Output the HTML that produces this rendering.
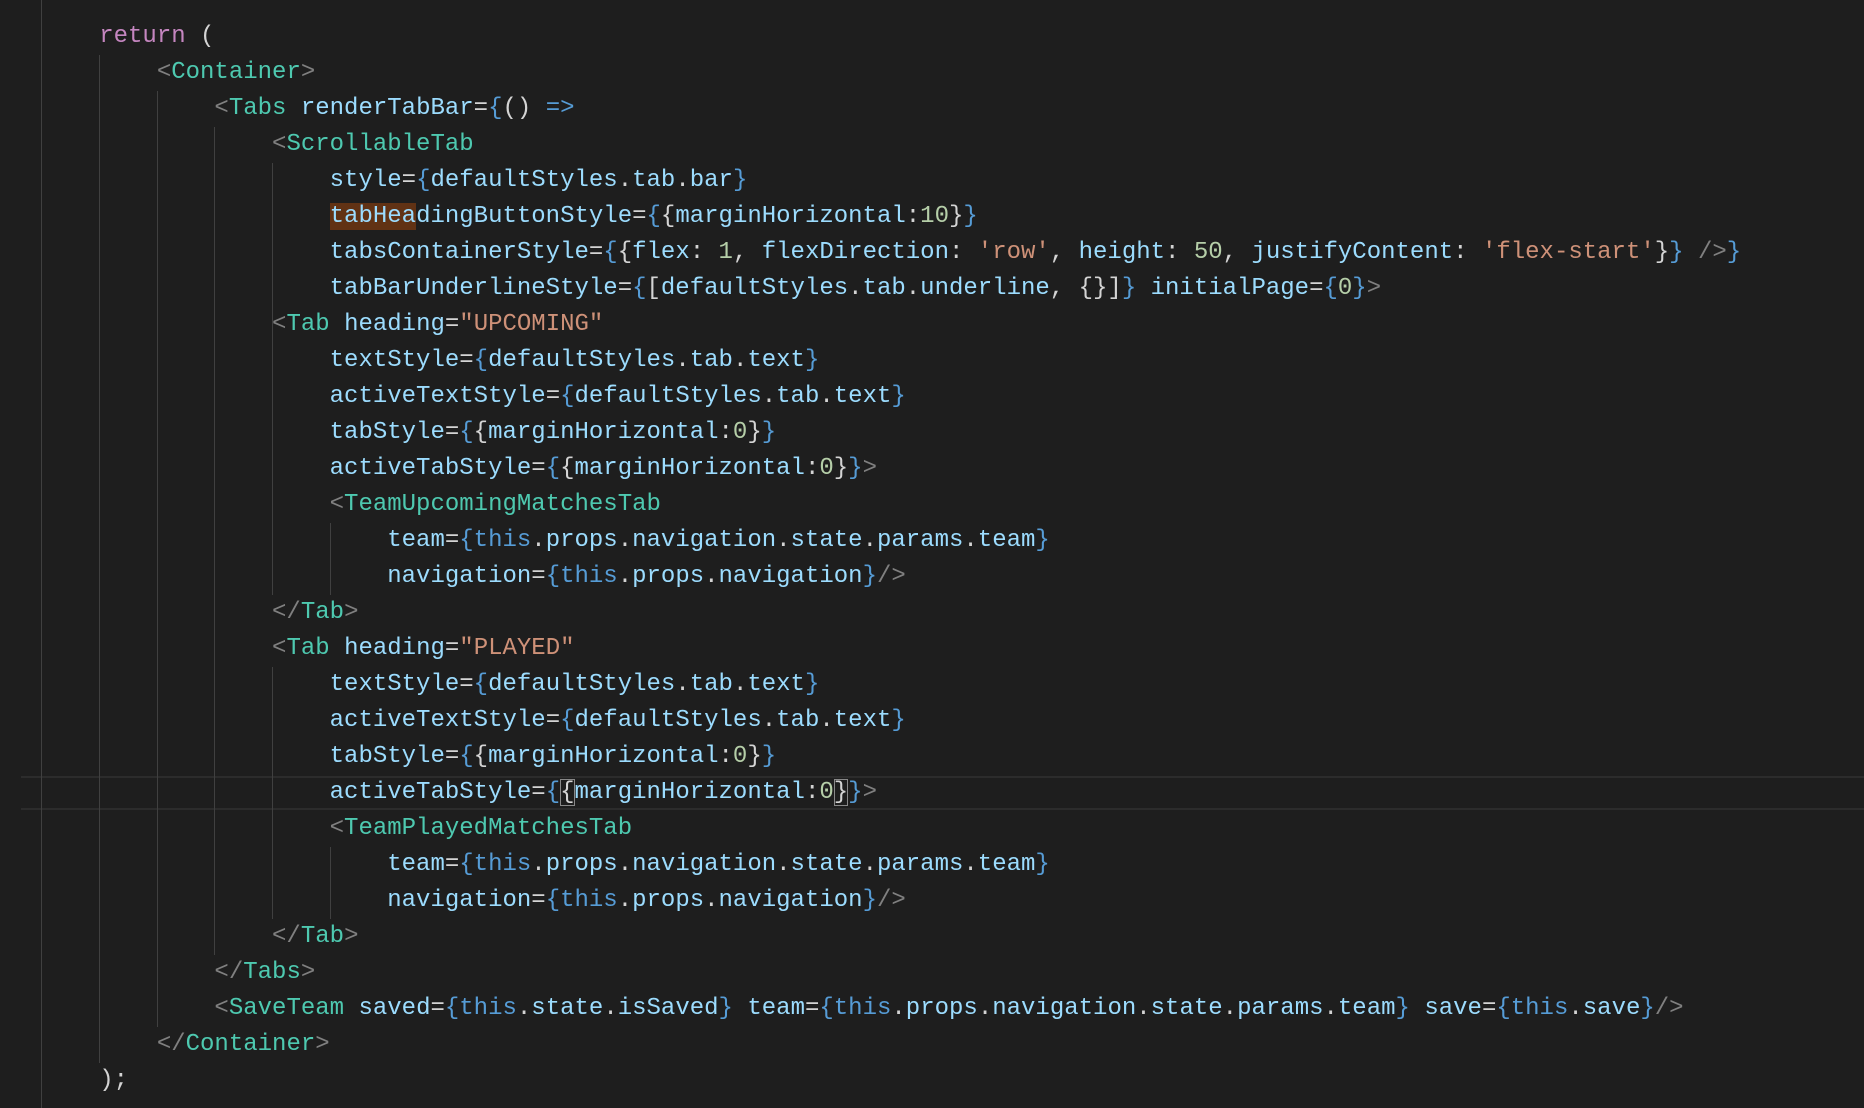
<!DOCTYPE html>
<html><head><meta charset="utf-8"><style>
html,body{margin:0;padding:0;background:#1e1e1e;width:1864px;height:1108px;overflow:hidden;position:relative}
pre{position:absolute;left:41.6px;top:19px;margin:0;font-family:"Liberation Mono",monospace;font-size:24px;line-height:36px;color:#d4d4d4;white-space:pre;z-index:2}
.k{color:#c586c0}.t{color:#4ec9b0}.p{color:#808080}.a{color:#9cdcfe}.b{color:#569cd6}.n{color:#b5cea8}.s{color:#ce9178}.w{color:#d4d4d4}
.sel{background:#613214}
.m{outline:1px solid #888;outline-offset:-1px}
.g{position:absolute;width:1px;background:#404040;z-index:1}
.cur{position:absolute;left:21px;right:0;height:2px;background:#2c2c2c}
</style></head><body>
<div class="cur" style="top:776px"></div>
<div class="cur" style="top:808px"></div>
<div class="g" style="left:41px;top:0;height:1108px"></div>
<div class="g" style="left:99px;top:55px;height:1008px"></div>
<div class="g" style="left:157px;top:91px;height:936px"></div>
<div class="g" style="left:214px;top:127px;height:828px"></div>
<div class="g" style="left:272px;top:163px;height:432px"></div>
<div class="g" style="left:272px;top:667px;height:252px"></div>
<div class="g" style="left:330px;top:523px;height:72px"></div>
<div class="g" style="left:330px;top:847px;height:72px"></div>
<pre>    <span class="k">return</span> (
        <span class="p">&lt;</span><span class="t">Container</span><span class="p">&gt;</span>
            <span class="p">&lt;</span><span class="t">Tabs</span> <span class="a">renderTabBar</span>=<span class="b">{</span>() <span class="b">=&gt;</span>
                <span class="p">&lt;</span><span class="t">ScrollableTab</span>
                    <span class="a">style</span>=<span class="b">{</span><span class="a">defaultStyles</span>.<span class="a">tab</span>.<span class="a">bar</span><span class="b">}</span>
                    <span class="a"><span class="sel">tabHea</span>dingButtonStyle</span>=<span class="b">{</span>{<span class="a">marginHorizontal</span>:<span class="n">10</span>}<span class="b">}</span>
                    <span class="a">tabsContainerStyle</span>=<span class="b">{</span>{<span class="a">flex</span>: <span class="n">1</span>, <span class="a">flexDirection</span>: <span class="s">'row'</span>, <span class="a">height</span>: <span class="n">50</span>, <span class="a">justifyContent</span>: <span class="s">'flex-start'</span>}<span class="b">}</span> <span class="p">/&gt;</span><span class="b">}</span>
                    <span class="a">tabBarUnderlineStyle</span>=<span class="b">{</span>[<span class="a">defaultStyles</span>.<span class="a">tab</span>.<span class="a">underline</span>, {}]<span class="b">}</span> <span class="a">initialPage</span>=<span class="b">{</span><span class="n">0</span><span class="b">}</span><span class="p">&gt;</span>
                <span class="p">&lt;</span><span class="t">Tab</span> <span class="a">heading</span>=<span class="s">"UPCOMING"</span>
                    <span class="a">textStyle</span>=<span class="b">{</span><span class="a">defaultStyles</span>.<span class="a">tab</span>.<span class="a">text</span><span class="b">}</span>
                    <span class="a">activeTextStyle</span>=<span class="b">{</span><span class="a">defaultStyles</span>.<span class="a">tab</span>.<span class="a">text</span><span class="b">}</span>
                    <span class="a">tabStyle</span>=<span class="b">{</span>{<span class="a">marginHorizontal</span>:<span class="n">0</span>}<span class="b">}</span>
                    <span class="a">activeTabStyle</span>=<span class="b">{</span>{<span class="a">marginHorizontal</span>:<span class="n">0</span>}<span class="b">}</span><span class="p">&gt;</span>
                    <span class="p">&lt;</span><span class="t">TeamUpcomingMatchesTab</span>
                        <span class="a">team</span>=<span class="b">{this</span>.<span class="a">props</span>.<span class="a">navigation</span>.<span class="a">state</span>.<span class="a">params</span>.<span class="a">team</span><span class="b">}</span>
                        <span class="a">navigation</span>=<span class="b">{this</span>.<span class="a">props</span>.<span class="a">navigation</span><span class="b">}</span><span class="p">/&gt;</span>
                <span class="p">&lt;/</span><span class="t">Tab</span><span class="p">&gt;</span>
                <span class="p">&lt;</span><span class="t">Tab</span> <span class="a">heading</span>=<span class="s">"PLAYED"</span>
                    <span class="a">textStyle</span>=<span class="b">{</span><span class="a">defaultStyles</span>.<span class="a">tab</span>.<span class="a">text</span><span class="b">}</span>
                    <span class="a">activeTextStyle</span>=<span class="b">{</span><span class="a">defaultStyles</span>.<span class="a">tab</span>.<span class="a">text</span><span class="b">}</span>
                    <span class="a">tabStyle</span>=<span class="b">{</span>{<span class="a">marginHorizontal</span>:<span class="n">0</span>}<span class="b">}</span>
                    <span class="a">activeTabStyle</span>=<span class="b">{</span><span class="m">{</span><span class="a">marginHorizontal</span>:<span class="n">0</span><span class="m">}</span><span class="b">}</span><span class="p">&gt;</span>
                    <span class="p">&lt;</span><span class="t">TeamPlayedMatchesTab</span>
                        <span class="a">team</span>=<span class="b">{this</span>.<span class="a">props</span>.<span class="a">navigation</span>.<span class="a">state</span>.<span class="a">params</span>.<span class="a">team</span><span class="b">}</span>
                        <span class="a">navigation</span>=<span class="b">{this</span>.<span class="a">props</span>.<span class="a">navigation</span><span class="b">}</span><span class="p">/&gt;</span>
                <span class="p">&lt;/</span><span class="t">Tab</span><span class="p">&gt;</span>
            <span class="p">&lt;/</span><span class="t">Tabs</span><span class="p">&gt;</span>
            <span class="p">&lt;</span><span class="t">SaveTeam</span> <span class="a">saved</span>=<span class="b">{this</span>.<span class="a">state</span>.<span class="a">isSaved</span><span class="b">}</span> <span class="a">team</span>=<span class="b">{this</span>.<span class="a">props</span>.<span class="a">navigation</span>.<span class="a">state</span>.<span class="a">params</span>.<span class="a">team</span><span class="b">}</span> <span class="a">save</span>=<span class="b">{this</span>.<span class="a">save</span><span class="b">}</span><span class="p">/&gt;</span>
        <span class="p">&lt;/</span><span class="t">Container</span><span class="p">&gt;</span>
    );
</pre>
</body></html>
